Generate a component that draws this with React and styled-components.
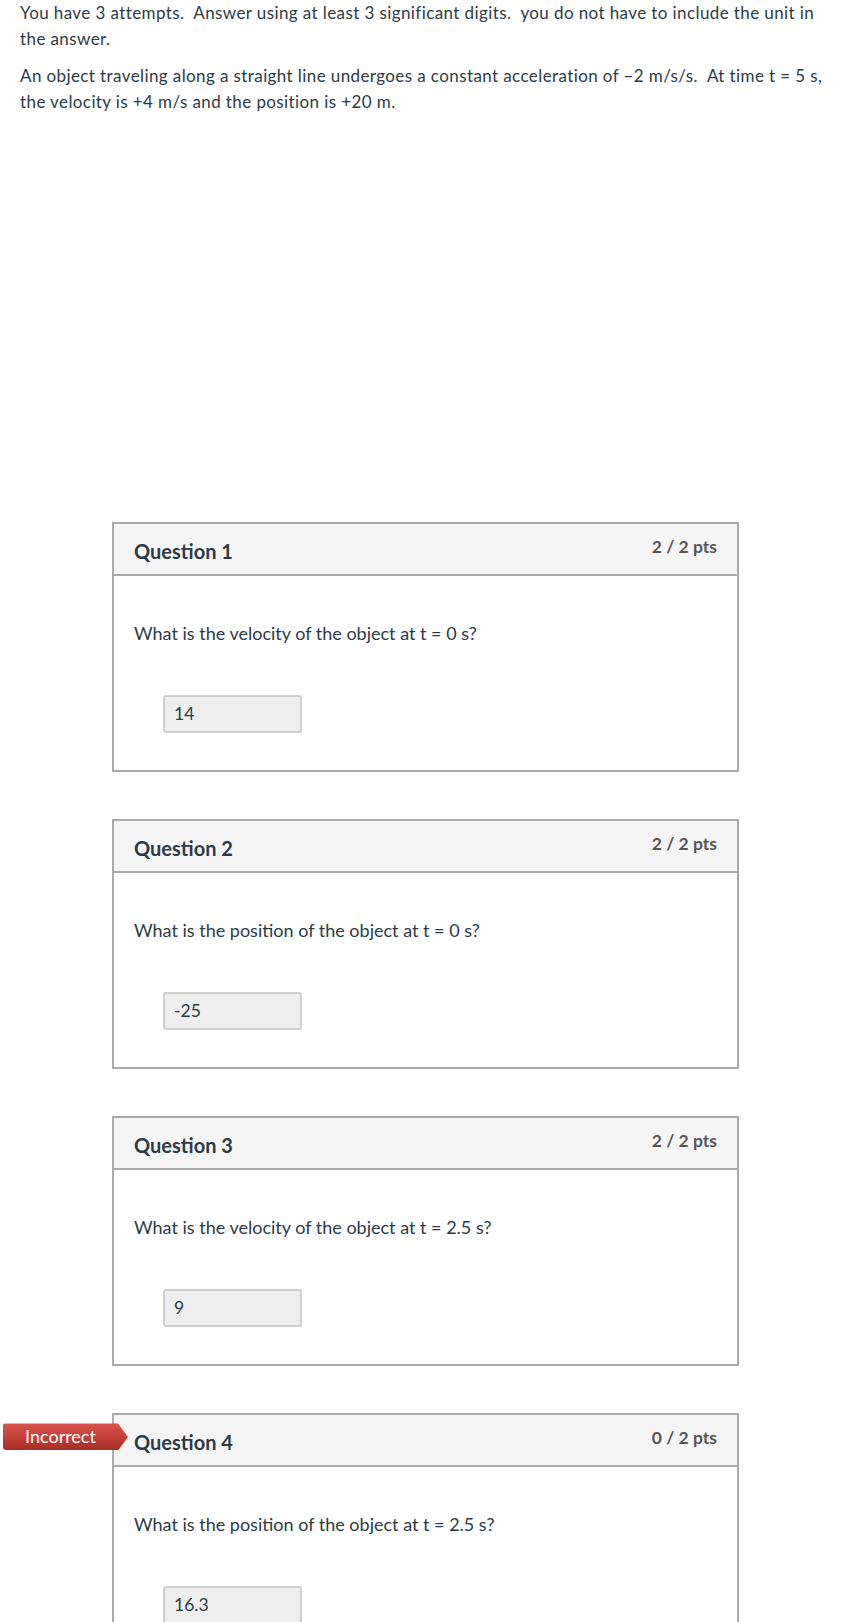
import React from "react";
import styled, { createGlobalStyle } from "styled-components";

const GlobalStyle = createGlobalStyle`
  html, body {
    margin: 0;
    padding: 0;
    background: #ffffff;
    overflow: hidden;
  }
  body {
    font-family: Lato, "Open Sans", sans-serif;
    color: #2d3b45;
  }
`;

const Page = styled.div`
  padding: 0 16px 0 20px;
  width: 842px;
  box-sizing: border-box;
`;

const Intro = styled.div`
  font-size: 17px;
  letter-spacing: 0.4px;
  line-height: 25.6px;
  padding-bottom: 408px;

  p {
    margin: 0 0 12px 0;
  }
  p:last-child {
    margin-bottom: 0;
  }
`;

const QuestionList = styled.div`
  display: flex;
  flex-direction: column;
  gap: 47px;
  padding-left: 92px;
`;

const QuestionBox = styled.div`
  position: relative;
  width: 627px;
  height: 250px;
  box-sizing: border-box;
  border: 2px solid #aaaaaa;
  background: #ffffff;
`;

const Header = styled.div`
  display: flex;
  justify-content: space-between;
  align-items: flex-start;
  height: 52px;
  box-sizing: border-box;
  padding: 11px 20px 0 20px;
  background: #f5f5f5;
  border-bottom: 2px solid #aaaaaa;
`;

const Title = styled.div`
  margin-top: 4px;
  font-size: 20px;
  line-height: 24px;
  font-weight: 700;
  color: #2d3b45;
`;

const Points = styled.div`
  font-size: 17.5px;
  line-height: 24px;
  font-weight: 700;
  color: #555555;
`;

const Body = styled.div`
  padding: 45px 20px 0 20px;
`;

const Prompt = styled.div`
  font-size: 18px;
  line-height: 25.6px;
`;

const Answer = styled.input`
  display: block;
  margin: 48px 0 0 29px;
  width: 139px;
  height: 38px;
  box-sizing: border-box;
  padding: 0 9px;
  border: 2px solid #cfcfcf;
  border-radius: 3px;
  background: #eeeeee;
  font-family: Lato, "Open Sans", sans-serif;
  font-size: 17.5px;
  color: #2d3b45;
  outline: none;
`;

const Badge = styled.div`
  position: absolute;
  top: 8px;
  left: -111px;
  width: 125px;
  height: 27px;
  box-sizing: border-box;
  padding-right: 10px;
  display: flex;
  align-items: center;
  justify-content: center;
  background: linear-gradient(to bottom, #d8564e 0%, #c23f37 55%, #a52d26 100%);
  border-radius: 3px 0 0 3px;
  clip-path: polygon(0 0, calc(100% - 10px) 0, 100% 50%, calc(100% - 10px) 100%, 0 100%);
  color: #ffffff;
  font-size: 18px;
  line-height: 27px;
`;

const intro = [
  "You have 3 attempts.\u00a0 Answer using at least 3 significant digits.\u00a0 you do not have to include the unit in the answer.",
  "An object traveling along a straight line undergoes a constant acceleration of \u22122 m/s/s.\u00a0 At time t = 5 s, the velocity is +4 m/s and the position is +20 m.",
];

const questions = [
  { name: "Question 1", pts: "2 / 2 pts", text: "What is the velocity of the object at t = 0 s?", answer: "14" },
  { name: "Question 2", pts: "2 / 2 pts", text: "What is the position of the object at t = 0 s?", answer: "-25" },
  { name: "Question 3", pts: "2 / 2 pts", text: "What is the velocity of the object at t = 2.5 s?", answer: "9" },
  { name: "Question 4", pts: "0 / 2 pts", text: "What is the position of the object at t = 2.5 s?", answer: "16.3", wrong: true },
];

const Question = ({ q }) => (
  <QuestionBox>
    {q.wrong && <Badge>Incorrect</Badge>}
    <Header>
      <Title>{q.name}</Title>
      <Points>{q.pts}</Points>
    </Header>
    <Body>
      <Prompt>{q.text}</Prompt>
      <Answer type="text" readOnly value={q.answer} />
    </Body>
  </QuestionBox>
);

export default function App() {
  return (
    <Page>
      <GlobalStyle />
      <Intro>
        {intro.map((t, i) => (
          <p key={i}>{t}</p>
        ))}
      </Intro>
      <QuestionList>
        {questions.map((q) => (
          <Question key={q.name} q={q} />
        ))}
      </QuestionList>
    </Page>
  );
}
